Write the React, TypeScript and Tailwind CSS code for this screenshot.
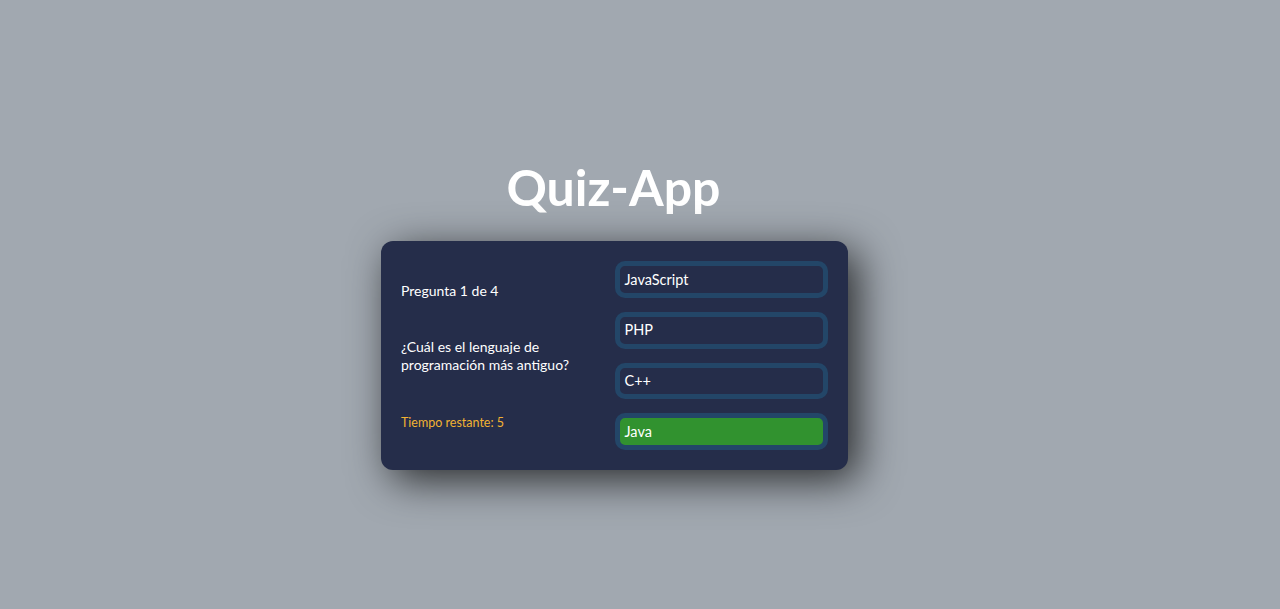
const answers = [
  { text: "JavaScript", correct: false },
  { text: "PHP", correct: false },
  { text: "C++", correct: false },
  { text: "Java", correct: true },
];

export default function App() {
  return (
    <div className="flex min-h-[609px] flex-col items-center bg-[#a1a8b0] pr-[51px] pt-[157px] font-['Lato',sans-serif] text-white">
      <h1 className="mb-[24px] ml-[-2px] text-[50px] font-bold leading-[60px]">Quiz-App</h1>

      <div className="flex w-[467px] rounded-xl bg-[#252d4a] p-5 shadow-[10px_10px_42px_0px_rgba(0,0,0,0.75)]">
        <div className="flex w-1/2 flex-col">
          <div className="mt-[20px] text-[14px] leading-5">Pregunta 1 de 4</div>
          <div className="mt-[37px] text-[14px] leading-[18px]">
            ¿Cuál es el lenguaje de programación más antiguo?
          </div>
          <div className="mt-[41px] text-[12.5px] leading-4 text-[#f2b232]">Tiempo restante: 5</div>
        </div>

        <div className="flex w-1/2 flex-col gap-[14px]">
          {answers.map((a) => (
            <button
              key={a.text}
              className={`flex h-[36.75px] w-full items-center rounded-[10px] border-[5px] border-[#234668] px-[5px] text-left text-[14.5px] text-white ${
                a.correct ? "bg-[#31922f]" : "bg-[#252d4a]"
              }`}
            >
              {a.text}
            </button>
          ))}
        </div>
      </div>
    </div>
  );
}
